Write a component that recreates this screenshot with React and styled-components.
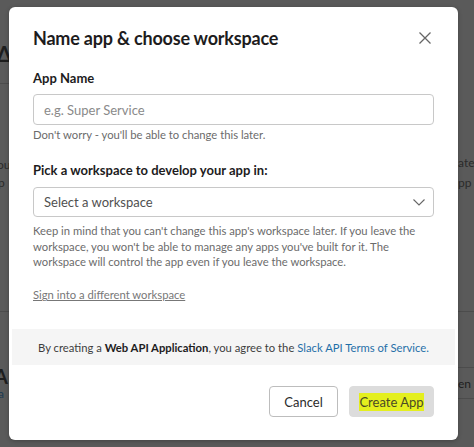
import React from "react";
import styled, { createGlobalStyle } from "styled-components";

const GlobalStyle = createGlobalStyle`
  html, body {
    margin: 0;
    padding: 0;
    background: #5a5a5a;
  }
  body {
    font-family: Lato, "Noto Sans", "Liberation Sans", sans-serif;
    -webkit-font-smoothing: antialiased;
  }
`;

const Backdrop = styled.div`
  position: relative;
  width: 474px;
  height: 447px;
  overflow: hidden;
  background: #5a5a5a;
  padding: 7px 0 0 9px;
  box-sizing: border-box;
`;

// faint pieces of the page under the dimmed overlay
const Behind = styled.div`
  position: absolute;
  left: ${(p) => p.x}px;
  top: ${(p) => p.y}px;
  color: ${(p) => p.color || "#262626"};
  font-size: ${(p) => p.size || 12}px;
  font-weight: ${(p) => (p.bold ? 700 : 400)};
  line-height: 1.1;
  white-space: nowrap;
`;

const Rule = styled.div`
  position: absolute;
  left: ${(p) => p.x}px;
  top: ${(p) => p.y}px;
  width: ${(p) => p.w}px;
  height: 1px;
  background: #4c4c4c;
`;

const Modal = styled.div`
  position: relative;
  z-index: 1;
  width: 449px;
  height: 433px;
  background: #fff;
  border-radius: 6px;
  box-shadow: 0 1px 4px rgba(0, 0, 0, 0.25);
  display: flex;
  flex-direction: column;
  box-sizing: border-box;
`;

const Header = styled.div`
  display: flex;
  align-items: center;
  justify-content: space-between;
  padding: 19px 24px 0 24px;
  height: 24px;
`;

const Title = styled.h1`
  margin: 0;
  font-size: 18px;
  line-height: 24px;
  font-weight: 700;
  color: #1d1c1d;
  letter-spacing: -0.2px;
`;

const CloseBtn = styled.button`
  border: 0;
  background: none;
  padding: 0;
  margin-right: 2px;
  width: 14px;
  height: 14px;
  display: flex;
  color: #666;
  cursor: pointer;
`;

const Body = styled.div`
  padding: 19px 24px 0 24px;
  display: flex;
  flex-direction: column;
`;

const Label = styled.label`
  font-size: 13px;
  line-height: 18px;
  font-weight: 700;
  color: #1d1c1d;
  margin-top: ${(p) => p.top || 0}px;
`;

const Field = styled.div`
  margin-top: ${(p) => p.top || 0}px;
  height: ${(p) => p.h || 31}px;
  box-sizing: border-box;
  border: 1px solid #c8c8c8;
  border-radius: 4px;
  display: flex;
  align-items: center;
  justify-content: space-between;
  padding: 0 8px 0 10px;
  font-size: 13px;
  color: ${(p) => (p.placeholder ? "#8a8a8a" : "#505050")};
`;

const Hint = styled.p`
  margin: ${(p) => p.top || 0}px 0 0 0;
  font-size: 11.25px;
  line-height: 15.3px;
  color: #6b6b6b;
`;

const SignIn = styled.a`
  margin-top: 18px;
  font-size: 11.25px;
  line-height: 15px;
  color: #777;
  text-decoration: underline;
  align-self: flex-start;
`;

const Terms = styled.div`
  margin: 27px 3px 0 3px;
  height: 36px;
  background: #f5f5f5;
  display: flex;
  align-items: center;
  justify-content: center;
  font-size: 11.25px;
  color: #3d3d3d;
  b {
    color: #1d1c1d;
    font-weight: 700;
  }
  a {
    color: #1f6fa8;
    text-decoration: none;
    margin-left: 3px;
  }
`;

const Footer = styled.div`
  display: flex;
  justify-content: flex-end;
  gap: 11px;
  padding: 21px 24px 0 24px;
`;

const Button = styled.button`
  height: 31px;
  width: ${(p) => (p.primary ? 85 : 69)}px;
  box-sizing: border-box;
  padding: 0;
  border-radius: 4px;
  font-family: inherit;
  font-size: 13px;
  font-weight: 400;
  border: 1px solid ${(p) => (p.primary ? "#dcdcdc" : "#bdbdbd")};
  background: ${(p) => (p.primary ? "#dcdcdc" : "#fff")};
  color: ${(p) => (p.primary ? "#4a4a26" : "#2b2b2b")};
`;

const Highlight = styled.span`
  background: #e4ef1e;
  padding: 1px 0;
`;

function XIcon() {
  return (
    <svg width="14" height="14" viewBox="0 0 14 14" fill="none">
      <path d="M1.5 1.5l11 11M12.5 1.5l-11 11" stroke="currentColor" strokeWidth="1.3" />
    </svg>
  );
}

function Chevron() {
  return (
    <svg width="12" height="7" viewBox="0 0 12 7" fill="none">
      <path d="M0.5 0.5l5.5 5.5 5.5-5.5" stroke="#666" strokeWidth="1.1" />
    </svg>
  );
}

export default function App() {
  return (
    <>
      <GlobalStyle />
      <Backdrop>
        <Behind x={-6} y={40} size={30} color="#1e1e1e">A</Behind>
        <Rule x={0} y={83} w={9} />
        <Behind x={-3} y={158} color="#2a2a2a">ou</Behind>
        <Behind x={-2} y={176} color="#2a2a2a">p</Behind>
        <Rule x={0} y={311} w={9} />
        <Behind x={-6} y={365} size={20} bold color="#1e1e1e">A</Behind>
        <Behind x={-2} y={387} color="#1c3a52">a</Behind>
        <Behind x={458} y={156} color="#2a2a2a">ate</Behind>
        <Behind x={458} y={176} color="#2a2a2a">pp</Behind>
        <Rule x={458} y={311} w={16} />
        <Rule x={458} y={367} w={16} />
        <Behind x={458} y={377} color="#1e1e1e">en</Behind>
        <Rule x={458} y={398} w={16} />
        <Modal role="dialog">
          <Header>
            <Title>Name app &amp; choose workspace</Title>
            <CloseBtn aria-label="Close">
              <XIcon />
            </CloseBtn>
          </Header>
          <Body>
            <Label>App Name</Label>
            <Field top={7} placeholder>e.g. Super Service</Field>
            <Hint top={2}>Don't worry - you'll be able to change this later.</Hint>
            <Label top={19}>Pick a workspace to develop your app in:</Label>
            <Field top={8} h={30}>
              Select a workspace
              <Chevron />
            </Field>
            <Hint top={6}>
              Keep in mind that you can't change this app's workspace later. If you leave the
              workspace, you won't be able to manage any apps you've built for it. The
              workspace will control the app even if you leave the workspace.
            </Hint>
            <SignIn href="#">Sign into a different workspace</SignIn>
          </Body>
          <Terms>
            By creating a&nbsp;<b>Web API Application</b>, you agree to the
            <a href="#">Slack API Terms of Service.</a>
          </Terms>
          <Footer>
            <Button>Cancel</Button>
            <Button primary>
              <Highlight>Create App</Highlight>
            </Button>
          </Footer>
        </Modal>
      </Backdrop>
    </>
  );
}
